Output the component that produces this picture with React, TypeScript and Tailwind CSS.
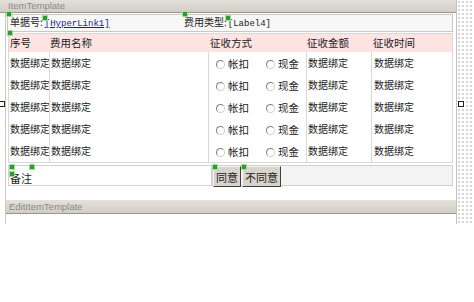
import React from "react";

const rows = [0, 1, 2, 3, 4];

function Tag({ className = "-top-[3px] -left-[2px]" }: { className?: string }) {
  return (
    <span className={`absolute ${className} w-[6px] h-[6px] bg-[#2f9a2f] border border-[#9de09d]`} />
  );
}

function Radio({ label }: { label: string }) {
  return (
    <span className="flex items-center gap-[3px]">
      <span className="w-[9px] h-[9px] rounded-full border border-[#808080] border-r-[#d0d0d0] border-b-[#d0d0d0] bg-white" />
      <span>{label}</span>
    </span>
  );
}

export default function App() {
  return (
    <div
      className="relative w-[474px] h-[302px] bg-white overflow-hidden flex items-start text-[10px] text-[#222]"
      style={{ fontFamily: '"Noto Sans CJK SC", "DejaVu Sans", sans-serif' }}
    >
      {/* left resize handle */}
      <span className="absolute top-[101px] left-0 w-[5px] h-[6px] border border-[#222] border-l-0 bg-white" />
      <div className="w-[456px] flex flex-col">
        <div
          className="h-[13px] bg-gradient-to-b from-[#e4e1da] to-[#d2cec6] border-b border-[#9a968e] pl-[8px] text-[9.5px] leading-[12px] text-[#8a8a8a]"
          style={{ fontFamily: '"Liberation Sans", sans-serif' }}
        >
          ItemTemplate
        </div>
        <div className="ml-[5px] border-l border-[#c8c8c8] flex flex-col">
          <div className="h-[187px] mr-[3px] flex flex-col pt-[1px]">
            {/* 单据号 row */}
            <div className="relative h-[18px] ml-[1px] border border-[#c8c8c8] bg-[#f7f7f7] flex items-center leading-[16px]">
              <span className="relative w-[176px] pl-[2px]">
                <Tag />
                单据号:
                <span
                  className="relative ml-[2px] text-[#1a1aa6] underline text-[9px]"
                  style={{ fontFamily: '"Liberation Mono", monospace' }}
                >
                  <Tag className="-top-[4px] -left-[3px]" />[HyperLink1]
                </span>
              </span>
              <span className="relative">
                <Tag />
                费用类型:
                <span
                  className="relative ml-[1px] text-[9px]"
                  style={{ fontFamily: '"Liberation Mono", monospace' }}
                >
                  <Tag className="-top-[4px] -left-[3px]" />[Label4]
                </span>
              </span>
            </div>
            {/* table */}
            <div className="relative mt-[1px] ml-[2px] border border-[#d8d8d8] flex flex-col">
              <Tag className="-top-[4px] -left-[2px]" />
              <div className="h-[18px] bg-[#fde3e1] flex items-center leading-[18px] text-[10.5px]">
                <div className="w-[40px] pl-[1px]">序号</div>
                <div className="w-[159px] pl-[1px]">费用名称</div>
                <div className="w-[98px] pl-[2px]">征收方式</div>
                <div className="w-[65px] pl-[1px]">征收金额</div>
                <div className="flex-1 pl-[2px]">征收时间</div>
              </div>
              {rows.map((r) => (
                <div key={r} className="h-[22px] flex leading-[22px]">
                  <div className="w-[40px] pl-[1px] whitespace-nowrap">数据绑定</div>
                  <div className="w-[159px] pl-[1px] border-l border-[#d8d8d8]">数据绑定</div>
                  <div className="w-[98px] pl-[7px] border-l border-[#d8d8d8] flex items-center gap-[17px] pt-[2px] text-[10.5px]">
                    <Radio label="帐扣" />
                    <Radio label="现金" />
                  </div>
                  <div className="w-[65px] pl-[1px] border-l border-[#d8d8d8]">数据绑定</div>
                  <div className="flex-1 pl-[2px] border-l border-[#d8d8d8]">数据绑定</div>
                </div>
              ))}
            </div>
            {/* 备注 row */}
            <div className="mt-[2px] ml-[2px] h-[21px] flex">
              <div className="relative w-[204px] border border-[#d0d0d0] bg-white flex items-end pl-[1px] leading-[14px] text-[11px]">
                <Tag className="top-[-2px] left-[0px]" />
                <Tag className="top-[-2px] left-[20px]" />
                <Tag className="top-[5px] left-[0px]" />
                备注
              </div>
              <div className="flex-1 flex border border-[#d0d0d0] bg-[#f3f3f3]">
                <button className="relative h-[21px] px-[2px] mr-[1px] bg-[#d8d4cc] border border-[#f5f5f5] border-r-[#404040] border-b-[#404040] text-[11px] leading-[16px]">
                  <Tag />同意
                </button>
                <button className="relative h-[21px] px-[2px] bg-[#d8d4cc] border border-[#f5f5f5] border-r-[#404040] border-b-[#404040] text-[11px] leading-[16px]">
                  <Tag />不同意
                </button>
              </div>
            </div>
          </div>
          <div
            className="h-[14px] bg-gradient-to-b from-[#e4e1da] to-[#d2cec6] border-b border-[#9a968e] pl-[3px] text-[9.5px] leading-[13px] text-[#8a8a8a]"
            style={{ fontFamily: '"Liberation Sans", sans-serif' }}
          >
            EditItemTemplate
          </div>
          <div className="h-[10px]" />
        </div>
      </div>
      <div
        className="relative w-[18px] h-[224px] border-l border-[#c0c0c0]"
        style={{
          backgroundImage: "radial-gradient(#a0a0a0 0.6px, transparent 0.8px)",
          backgroundSize: "4px 4px",
        }}
      >
        <span className="absolute top-[101px] left-[1px] w-[6px] h-[6px] border border-[#222] bg-white" />
      </div>
    </div>
  );
}
